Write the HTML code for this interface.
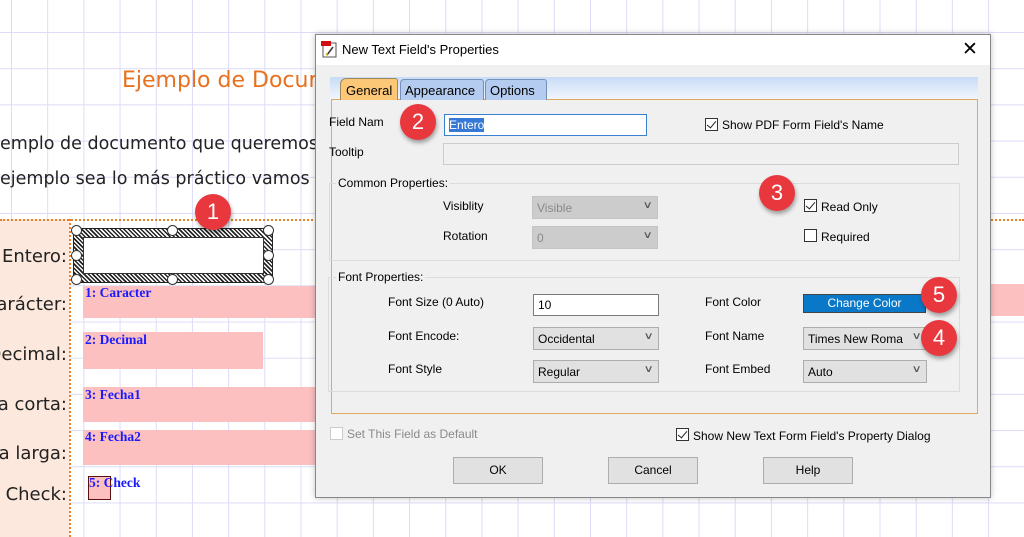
<!DOCTYPE html>
<html><head><meta charset="utf-8"><style>
*{margin:0;padding:0;box-sizing:border-box}
body{width:1024px;height:537px;overflow:hidden;position:relative;background:#fff;font-family:"Liberation Sans",sans-serif;font-size:12px;color:#000}
.grid{position:absolute;inset:0;background-image:linear-gradient(to right,#dcdcf8 1px,transparent 1px),linear-gradient(to bottom,#dcdcf8 1px,transparent 1px);background-size:36.2px 36.2px;background-position:11px 32px}
.a{position:absolute}
.doc{font-family:"DejaVu Sans","Liberation Sans",sans-serif;font-size:17.5px;color:#222}
.lab{font-family:"DejaVu Sans",sans-serif;font-size:18px;color:#222;width:67px;height:26px;left:0;overflow:hidden}
.lab span{position:absolute;right:0;top:0;white-space:nowrap}
.pink{background:#fcc0c0;position:absolute}
.ft{font-family:"Liberation Serif",serif;font-weight:bold;color:#1a1aff;font-size:13.5px;position:absolute}
.badge{position:absolute;width:36px;height:36px;border-radius:50%;background:#e8383e;color:#fff;font-size:22px;text-align:center;line-height:36px;box-shadow:1px 3px 4px rgba(0,0,0,.35)}
.inp{position:absolute;background:#fff;border:1px solid #7a7a7a;height:22px;padding:3px 4px}
.sel{position:absolute;background:#e1e1e1;border:1px solid #adadad;height:23px;padding:4px 4px;color:#000}
.sel:after{content:"\2228";position:absolute;right:6px;top:3px;font-size:10px;color:#555;transform:scaleX(1.4)}
.dis{color:#8a8a8a;background:#ccc;border-color:#c4c4c4}
.cb{position:absolute;width:13px;height:13px;border:1px solid #333;background:#fff}
.cb.k:after{content:"";position:absolute;left:3px;top:0px;width:4px;height:8px;border:solid #222;border-width:0 1.5px 1.5px 0;transform:rotate(40deg)}
.grp{position:absolute;border:1px solid #dcdcdc}
.btn{position:absolute;background:#e1e1e1;border:1px solid #adadad;height:27px;text-align:center;line-height:25px}
.h{position:absolute;width:11px;height:11px;border-radius:50%;background:#fff;border:1px solid #333}
</style></head><body>
<div class="grid"></div>
<div class="a doc" style="left:122px;top:68px;font-size:22px;color:#e8711f">Ejemplo de Documento</div>
<div class="a doc" style="left:0;top:134px">emplo de documento que queremos</div>
<div class="a doc" style="left:0;top:169px">ejemplo sea lo más práctico vamos a</div>
<div class="a" style="left:0;top:219px;width:70px;height:318px;background:#fce8dc"></div>
<div class="a" style="left:0;top:219px;width:1024px;border-top:2px dotted #e8822a"></div>
<div class="a" style="left:69px;top:219px;height:318px;border-left:2px dotted #e8822a"></div>
<div class="a lab" style="top:246px"><span>Entero:</span></div>
<div class="a lab" style="top:294px"><span>Carácter:</span></div>
<div class="a lab" style="top:344px"><span>Decimal:</span></div>
<div class="a lab" style="top:394px"><span>Fecha corta:</span></div>
<div class="a lab" style="top:443px"><span>Fecha larga:</span></div>
<div class="a lab" style="top:484px"><span>Check:</span></div>
<div class="a" style="left:73px;top:228px;width:200px;height:55px;background:repeating-linear-gradient(45deg,#222 0 1.5px,#fff 1.5px 3px);border:1px solid #222"></div>
<div class="a" style="left:83px;top:237px;width:181px;height:37px;background:#fff;border:1px solid #333"></div>
<div class="h" style="left:71px;top:225px"></div><div class="h" style="left:167px;top:225px"></div><div class="h" style="left:263px;top:225px"></div>
<div class="h" style="left:71px;top:250px"></div><div class="h" style="left:263px;top:250px"></div>
<div class="h" style="left:71px;top:274px"></div><div class="h" style="left:167px;top:274px"></div><div class="h" style="left:263px;top:274px"></div>
<div class="pink" style="left:83px;top:286px;width:233px;height:32px"></div>
<div class="pink" style="left:83px;top:332px;width:180px;height:37px"></div>
<div class="pink" style="left:83px;top:387px;width:233px;height:35px"></div>
<div class="pink" style="left:83px;top:430px;width:233px;height:35px"></div>
<div class="pink" style="left:970px;top:284px;width:54px;height:32px"></div>
<div class="a" style="left:88px;top:476px;width:23px;height:24px;background:#fcc0c0;border:1.5px solid #5a1010"></div>
<div class="ft" style="left:85px;top:285px">1: Caracter</div>
<div class="ft" style="left:85px;top:332px">2: Decimal</div>
<div class="ft" style="left:85px;top:387px">3: Fecha1</div>
<div class="ft" style="left:85px;top:429px">4: Fecha2</div>
<div class="ft" style="left:89px;top:475px">5: Check</div>
<div class="badge" style="left:195px;top:194px">1</div>

<div class="a" style="left:315px;top:34px;width:676px;height:464px;background:#f0f0f0;border:1px solid #888;box-shadow:0 0 6px rgba(0,0,0,.25)">
 <div class="a" style="left:0;top:0;width:674px;height:30px;background:#fff"></div>
 <svg class="a" style="left:4px;top:5px" width="18" height="18"><rect x="3" y="3" width="13" height="14" fill="#fff" stroke="#555"/><rect x="1" y="1" width="10" height="5" fill="#d01010"/><path d="M7 15 L13 7" stroke="#333" stroke-width="1.5"/><path d="M6 14 L8 15" stroke="#e0a000" stroke-width="2"/></svg>
 <div class="a" style="left:26px;top:7px;font-size:13px">New Text Field's Properties</div>
 <div class="a" style="left:646px;top:3px;font-size:19px;font-weight:300">✕</div>
 <div class="a" style="left:14px;top:42px;width:648px;height:24px;background:linear-gradient(#c8dcf6,#f4f8fe)"></div>
 <div class="a" style="left:15px;top:64px;width:647px;height:315px;border:1px solid #e0a860;background:#f0f0f0"></div>
 <div class="a" style="left:24px;top:43px;width:58px;height:22px;background:#fcc878;border:1px solid #a0885a;border-bottom:none;border-radius:6px 3px 0 0;padding:4px 5px;font-size:13px">General</div>
 <div class="a" style="left:84px;top:44px;width:84px;height:21px;background:#b4ccf0;border:1px solid #7890b8;border-bottom:none;border-radius:4px 3px 0 0;padding:3px 4px;font-size:13px">Appearance</div>
 <div class="a" style="left:169px;top:44px;width:62px;height:21px;background:#b4ccf0;border:1px solid #7890b8;border-bottom:none;border-radius:4px 3px 0 0;padding:3px 4px;font-size:13px">Options</div>
 <div class="a" style="left:13px;top:80px">Field Nam</div>
 <div class="inp" style="left:128px;top:79px;width:203px;border-color:#3a80d0"><span style="background:#3478d8;color:#fff">Entero</span></div>
 <div class="cb k" style="left:389px;top:83px"></div><div class="a" style="left:406px;top:83px">Show PDF Form Field's Name</div>
 <div class="a" style="left:13px;top:110px">Tooltip</div>
 <div class="inp" style="left:127px;top:108px;width:516px;background:#f0f0f0;border-color:#ccc"></div>
 <div class="grp" style="left:13px;top:148px;width:631px;height:78px"></div>
 <div class="a" style="left:20px;top:141px;background:#f0f0f0;padding:0 2px">Common Properties:</div>
 <div class="a" style="left:127px;top:164px">Visiblity</div>
 <div class="sel dis" style="left:216px;top:161px;width:126px">Visible</div>
 <div class="a" style="left:127px;top:194px">Rotation</div>
 <div class="sel dis" style="left:216px;top:191px;width:126px">0</div>
 <div class="cb k" style="left:488px;top:164px"></div><div class="a" style="left:505px;top:165px">Read Only</div>
 <div class="cb" style="left:488px;top:194px"></div><div class="a" style="left:505px;top:195px">Required</div>
 <div class="grp" style="left:12px;top:242px;width:632px;height:115px"></div>
 <div class="a" style="left:20px;top:235px;background:#f0f0f0;padding:0 2px">Font Properties:</div>
 <div class="a" style="left:72px;top:260px">Font Size (0 Auto)</div>
 <div class="inp" style="left:217px;top:259px;width:126px">10</div>
 <div class="a" style="left:72px;top:294px">Font Encode:</div>
 <div class="sel" style="left:217px;top:292px;width:126px">Occidental</div>
 <div class="a" style="left:72px;top:327px">Font Style</div>
 <div class="sel" style="left:217px;top:325px;width:126px">Regular</div>
 <div class="a" style="left:389px;top:260px">Font Color</div>
 <div class="a" style="left:487px;top:259px;width:123px;height:19px;background:#0a78c8;border:1px solid #444;color:#fff;text-align:center;line-height:17px">Change Color</div>
 <div class="a" style="left:389px;top:294px">Font Name</div>
 <div class="sel" style="left:487px;top:292px;width:124px;overflow:hidden;white-space:nowrap">Times New Roma</div>
 <div class="a" style="left:389px;top:327px">Font Embed</div>
 <div class="sel" style="left:487px;top:325px;width:124px">Auto</div>
 <div class="cb" style="left:14px;top:392px;border-color:#ccc"></div><div class="a" style="left:31px;top:392px;color:#8a8a8a">Set This Field as Default</div>
 <div class="cb k" style="left:360px;top:393px"></div><div class="a" style="left:377px;top:394px">Show New Text Form Field's Property Dialog</div>
 <div class="btn" style="left:137px;top:422px;width:90px">OK</div>
 <div class="btn" style="left:292px;top:422px;width:90px">Cancel</div>
 <div class="btn" style="left:447px;top:422px;width:90px">Help</div>
</div>
<div class="badge" style="left:400px;top:104px">2</div>
<div class="badge" style="left:759px;top:175px">3</div>
<div class="badge" style="left:921px;top:320px">4</div>
<div class="badge" style="left:921px;top:277px">5</div>
</body></html>
